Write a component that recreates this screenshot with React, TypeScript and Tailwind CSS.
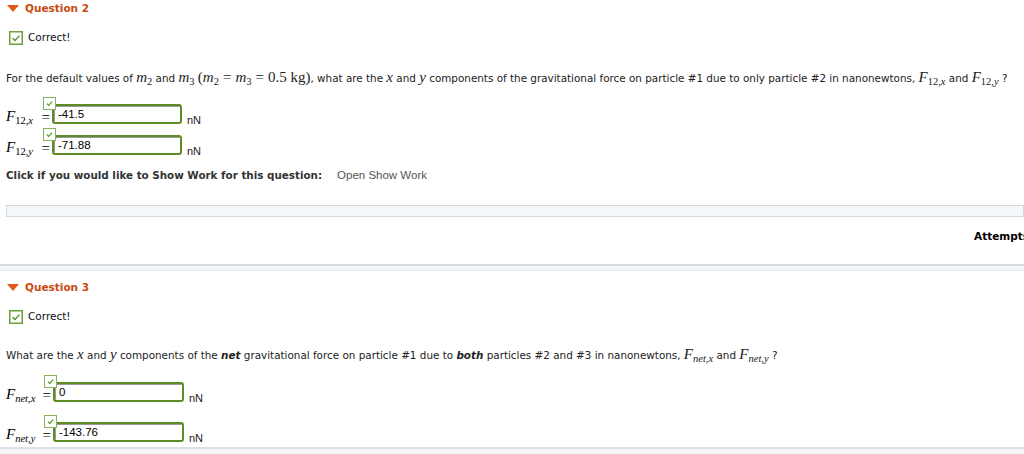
import React from "react";

const Tri = () => (
  <svg width="12" height="7" viewBox="0 0 12 7" className="block">
    <polygon points="0,0 12,0 6,7" fill="#e2581b" />
  </svg>
);

const CorrectBox = () => (
  <svg width="14" height="14" viewBox="0 0 14 14" className="block">
    <rect x="0.75" y="0.75" width="12.5" height="12.5" fill="#fff" stroke="#6e9f3c" strokeWidth="1.5" />
    <path d="M3.6 7.2 L6 9.5 L10.4 4.6" fill="none" stroke="#4f8f25" strokeWidth="1.3" />
  </svg>
);

const SmallCheck = () => (
  <svg width="13" height="13" viewBox="0 0 13 13" className="block">
    <rect x="0.5" y="0.5" width="12" height="12" fill="#fff" stroke="#86b25a" strokeWidth="1" />
    <path d="M3.8 6.6 L5.7 8.3 L9.2 4.6" fill="none" stroke="#5a9a2a" strokeWidth="1.2" />
  </svg>
);

const M = ({ children }: { children: React.ReactNode }) => (
  <span className="font-['Liberation_Serif',serif] italic text-[15px]">{children}</span>
);
const R = ({ children }: { children: React.ReactNode }) => (
  <span className="font-['Liberation_Serif',serif] text-[15px]">{children}</span>
);
const Eq = () => (
  <span className="font-['Liberation_Serif',serif] text-[15px] mx-[4px]">=</span>
);
const Sub = ({ children, italic }: { children: React.ReactNode; italic?: boolean }) => (
  <span
    className={
      "font-['Liberation_Serif',serif] text-[10.5px] relative top-[3px] " + (italic ? "italic" : "")
    }
  >
    {children}
  </span>
);

const F12 = ({ c }: { c: string }) => (
  <span className="whitespace-nowrap">
    <M>F</M>
    <Sub>12,</Sub>
    <Sub italic>{c}</Sub>
  </span>
);
const Fnet = ({ c }: { c: string }) => (
  <span className="whitespace-nowrap">
    <M>F</M>
    <Sub italic>net</Sub>
    <Sub>,</Sub>
    <Sub italic>{c}</Sub>
  </span>
);

const Answer = ({ value, w }: { value: string; w: string }) => (
  <div className={"relative h-[20px] " + w}>
    <div className="absolute left-[-9px] top-[-7px] z-10">
      <SmallCheck />
    </div>
    <div className="h-full w-full rounded-[3px] border-2 border-[#5e8c24] bg-white overflow-hidden">
      <div className="h-full w-full border-l border-t border-[#9a9a9a] pl-[3px] flex items-center font-['Liberation_Sans',Arial,sans-serif] text-[11.5px] text-black leading-none">
        {value}
      </div>
    </div>
  </div>
);

const Row = ({
  label,
  value,
  mt,
  labelW,
  boxW,
}: {
  label: React.ReactNode;
  value: string;
  mt: string;
  labelW: string;
  boxW: string;
}) => (
  <div className={"flex items-end h-[29px] pl-[6px] " + mt}>
    <div className={"flex items-end justify-between leading-none " + labelW}>
      <span className="leading-none">{label}</span>
      <span className="font-['Liberation_Serif',serif] text-[15px] leading-none pr-[2px] relative top-[1px]">=</span>
    </div>
    <Answer value={value} w={boxW} />
    <span className="ml-[5px] font-['Liberation_Sans',Arial,sans-serif] text-[11px] leading-none relative top-[2px] text-[#222]">
      nN
    </span>
  </div>
);

const Header = ({ n, mt }: { n: number; mt: string }) => (
  <div className={"flex items-center h-[16px] pl-[7px] gap-[6px] " + mt}>
    <Tri />
    <span className="font-bold text-[10.5px] text-[#c94a10]">Question {n}</span>
  </div>
);

const Correct = ({ mt }: { mt: string }) => (
  <div className={"flex items-center h-[16px] pl-[9px] gap-[5px] " + mt}>
    <CorrectBox />
    <span className="text-[10.5px] text-[#111]">Correct!</span>
  </div>
);

export default function App() {
  return (
    <div className="w-[1024px] h-[454px] overflow-hidden bg-white flex flex-col font-['DejaVu_Sans',Verdana,sans-serif] text-black">
      <Header n={2} mt="mt-[1px]" />
      <Correct mt="mt-[13px]" />
      <div className="mt-[24px] h-[16px] pl-[6px] flex items-center whitespace-nowrap text-[10.4px] text-[#222]">
        <span>
          For the default values of <M>m</M>
          <Sub>2</Sub> and <M>m</M>
          <Sub>3</Sub> <R>(</R>
          <M>m</M>
          <Sub>2</Sub>
          <Eq />
          <M>m</M>
          <Sub>3</Sub>
          <Eq />
          <R>0.5 kg)</R>, what are the <M>x</M> and <M>y</M> components of the gravitational force on
          particle #1 due to only particle #2 in nanonewtons, <F12 c="x" /> and <F12 c="y" /> ?
        </span>
      </div>
      <Row label={<F12 c="x" />} value="-41.5" mt="mt-[10px]" labelW="w-[46px]" boxW="w-[130px]" />
      <Row label={<F12 c="y" />} value="-71.88" mt="mt-[2px]" labelW="w-[46px]" boxW="w-[130px]" />
      <div className="mt-[14px] h-[14px] pl-[6px] flex items-center whitespace-nowrap">
        <span className="font-bold text-[10.35px] text-[#333]">Click if you would like to Show Work for this question:</span>
        <span className="ml-[15px] font-['Liberation_Sans',Arial,sans-serif] text-[11.5px] text-[#555]">Open Show Work</span>
      </div>
      <div className="mt-[22px] ml-[6px] h-[12px] border border-[#d3d8de] bg-[#f5f8fb]" />
      <div className="mt-[13px] h-[14px] flex items-center whitespace-nowrap pl-[974px]">
        <span className="font-bold text-[10.5px] text-black">Attempts</span>
      </div>
      <div className="mt-[20px] h-[7px] border-t-2 border-b border-t-[#d8dde2] border-b-[#e4e8ec] bg-[#f4f7fa]" />
      <Header n={3} mt="mt-[9px]" />
      <Correct mt="mt-[13px]" />
      <div className="mt-[22px] h-[16px] pl-[6px] flex items-center whitespace-nowrap text-[10.4px] text-[#222]">
        <span>
          What are the <M>x</M> and <M>y</M> components of the <b><i>net</i></b> gravitational force on particle #1
          due to <b><i>both</i></b> particles #2 and #3 in nanonewtons, <Fnet c="x" /> and <Fnet c="y" /> ?
        </span>
      </div>
      <Row label={<Fnet c="x" />} value="0" mt="mt-[11px]" labelW="w-[47px]" boxW="w-[131px]" />
      <Row label={<Fnet c="y" />} value="-143.76" mt="mt-[11px]" labelW="w-[47px]" boxW="w-[131px]" />
      <div className="mt-[5px] h-[7px] border-t-2 border-t-[#dde1e5] bg-[#f2f4f6]" />
    </div>
  );
}
